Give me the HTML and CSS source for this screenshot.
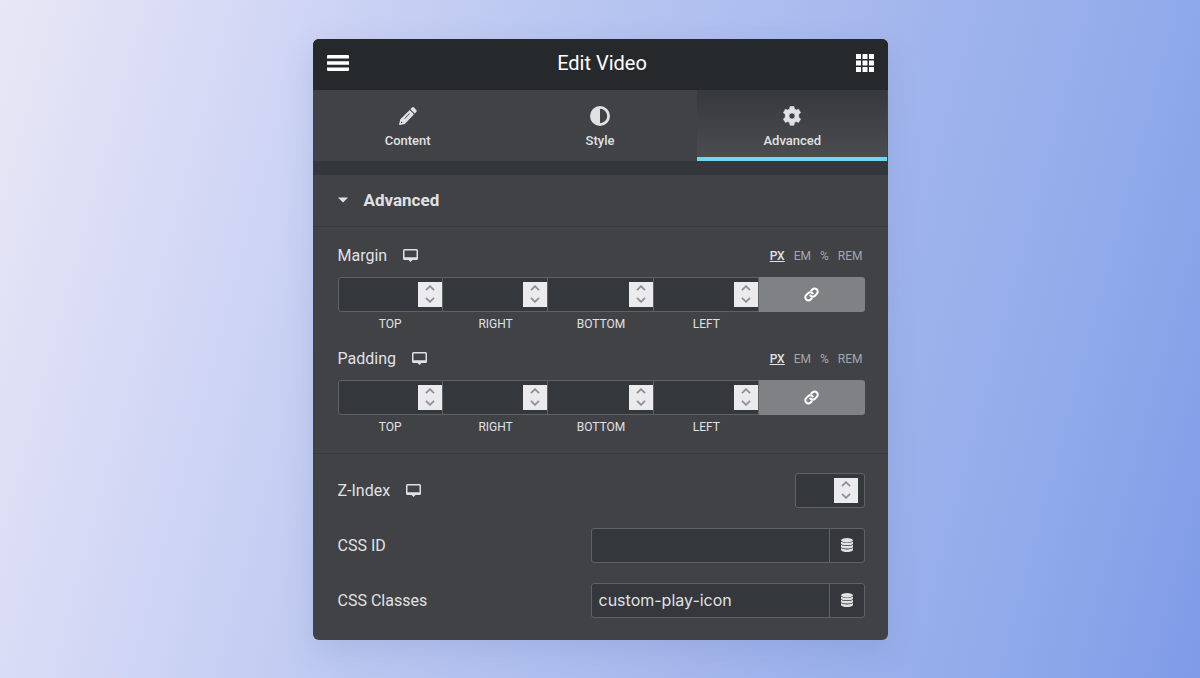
FILE: index.html
```html
<!DOCTYPE html>
<html lang="en">
<head>
  <meta charset="UTF-8">
  <meta name="viewport" content="width=device-width, initial-scale=1.0">
  <title>Edit Video</title>
  <link rel="stylesheet" href="styles.css">
</head>
<body>
  <!-- Shared icons -->
  <svg class="sprite" aria-hidden="true">
    <symbol id="icon-desktop" viewBox="0 0 15 13">
      <path fill="currentColor" fill-rule="evenodd" d="M1.500 0h12A1.500 1.500 0 0 1 15 1.500v8a1.500 1.500 0 0 1-1.500 1.500H9.500L7.500 13l-2-2h-4A1.500 1.500 0 0 1 0 9.500v-8A1.500 1.500 0 0 1 1.500 0zm0 1.400v6.800h12V1.400z"/>
    </symbol>
    <symbol id="icon-up" viewBox="0 0 10 6">
      <path fill="none" stroke="currentColor" stroke-width="1.800" d="M1 5.200l4-4 4 4"/>
    </symbol>
    <symbol id="icon-down" viewBox="0 0 10 6">
      <path fill="none" stroke="currentColor" stroke-width="1.800" d="M1 .8l4 4 4-4"/>
    </symbol>
    <symbol id="icon-link" viewBox="0 0 24 24">
      <g fill="none" stroke="currentColor" stroke-width="3.200" stroke-linecap="round">
        <path d="M10 13.500a5 5 0 0 0 7.500.5l3-3a5 5 0 0 0-7.100-7.100l-1.700 1.700"/>
        <path d="M14 10.500a5 5 0 0 0-7.500-.5l-3 3a5 5 0 0 0 7.100 7.100l1.700-1.700"/>
      </g>
    </symbol>
    <symbol id="icon-database" viewBox="0 0 12 14">
      <ellipse cx="6" cy="2.200" rx="6" ry="2.200" fill="currentColor"/>
      <path fill="currentColor" d="M0 3.500c1.500 1.700 10.500 1.700 12 0v2.200c-1 2-11 2-12 0zM0 6.800c1.500 1.700 10.500 1.700 12 0V9c-1 2-11 2-12 0zM0 10.100c1.500 1.700 10.500 1.700 12 0v1.800c-1 2.800-11 2.800-12 0z"/>
    </symbol>
  </svg>

  <main class="panel">
    <header class="panel-header">
      <button class="icon-button" type="button" aria-label="Menu">
        <svg width="22" height="16" viewBox="0 0 22 16"><path fill="currentColor" d="M1 0h20a1 1 0 0 1 1 1v2.500H0V1a1 1 0 0 1 1-1zM0 6.200h22v3.600H0zM0 12.500h22V15a1 1 0 0 1-1 1H1a1 1 0 0 1-1-1z"/></svg>
      </button>
      <h1>Edit Video</h1>
      <button class="icon-button" type="button" aria-label="Widgets">
        <svg width="18" height="18" viewBox="0 0 18 18"><path fill="currentColor" d="M0 0h5v5H0zM6.500 0h5v5h-5zM13 0h5v5h-5zM0 6.500h5v5H0zM6.500 6.500h5v5h-5zM13 6.500h5v5h-5zM0 13h5v5H0zM6.500 13h5v5h-5zM13 13h5v5h-5z"/></svg>
      </button>
    </header>

    <nav class="tabs">
      <button class="tab" type="button">
        <svg width="20" height="20" viewBox="0 0 20 20"><path fill="currentColor" fill-rule="evenodd" d="M14 1.600a1.400 1.400 0 0 1 2 0l2.300 2.300a1.400 1.400 0 0 1 0 2l-1.600 1.700-4.300-4.300zM11.700 4l4.300 4.300-9.200 9.600-4.900 1.100a.7.7 0 0 1-.8-.8L2.300 13.300zM3.300 15.400l-.5 1.900 1.900-.5zM11.300 7.300l-5 5.100.5.500 5-5.100z"/></svg>
        <span>Content</span>
      </button>
      <button class="tab" type="button">
        <svg width="20" height="20" viewBox="0 0 20 20"><path fill="currentColor" fill-rule="evenodd" d="M10 0a10 10 0 1 1 0 20 10 10 0 0 1 0-20zm0 2.800v14.400a7.200 7.200 0 0 0 0-14.400z"/></svg>
        <span>Style</span>
      </button>
      <button class="tab active" type="button">
        <svg width="20" height="20" viewBox="0 0 20 20"><path fill="currentColor" fill-rule="evenodd" d="M8 .6h4l.5 2.500 1.700 1 2.400-.8 2 3.400-1.900 1.700v2.900l1.900 1.700-2 3.400-2.400-.8-1.700 1-.5 2.600H8l-.5-2.600-1.700-1-2.400.8-2-3.400 1.900-1.700V8.400L1.400 6.700l2-3.400 2.400.8 1.700-1zM10 7a3 3 0 1 0 0 6 3 3 0 0 0 0-6z" stroke="currentColor" stroke-linejoin="round" stroke-width=".6"/></svg>
        <span>Advanced</span>
      </button>
    </nav>

    <section>
      <h2 class="section-heading">
        <button type="button" aria-expanded="true">
          <svg width="10" height="6" viewBox="0 0 10 6"><path fill="currentColor" d="M0 .5h10L5 5.500z"/></svg>
          Advanced
        </button>
      </h2>

      <div class="controls">
        <fieldset class="dimensions">
          <div class="control-title">
            <span class="control-label">Margin</span>
            <svg class="device" width="15" height="13"><use href="#icon-desktop"/></svg>
            <div class="units">
              <button class="selected" type="button">PX</button>
              <button type="button">EM</button>
              <button type="button">%</button>
              <button type="button">REM</button>
            </div>
          </div>
          <div class="sides">
            <div class="number">
              <input type="number" id="margin-top">
              <span class="stepper"><button type="button" aria-label="Increase"><svg width="10" height="6"><use href="#icon-up"/></svg></button><button type="button" aria-label="Decrease"><svg width="10" height="6"><use href="#icon-down"/></svg></button></span>
            </div>
            <div class="number">
              <input type="number" id="margin-right">
              <span class="stepper"><button type="button" aria-label="Increase"><svg width="10" height="6"><use href="#icon-up"/></svg></button><button type="button" aria-label="Decrease"><svg width="10" height="6"><use href="#icon-down"/></svg></button></span>
            </div>
            <div class="number">
              <input type="number" id="margin-bottom">
              <span class="stepper"><button type="button" aria-label="Increase"><svg width="10" height="6"><use href="#icon-up"/></svg></button><button type="button" aria-label="Decrease"><svg width="10" height="6"><use href="#icon-down"/></svg></button></span>
            </div>
            <div class="number">
              <input type="number" id="margin-left">
              <span class="stepper"><button type="button" aria-label="Increase"><svg width="10" height="6"><use href="#icon-up"/></svg></button><button type="button" aria-label="Decrease"><svg width="10" height="6"><use href="#icon-down"/></svg></button></span>
            </div>
            <button class="link-values" type="button" aria-label="Link values"><svg width="15" height="15"><use href="#icon-link"/></svg></button>
          </div>
          <div class="side-labels">
            <label for="margin-top">TOP</label>
            <label for="margin-right">RIGHT</label>
            <label for="margin-bottom">BOTTOM</label>
            <label for="margin-left">LEFT</label>
          </div>
        </fieldset>

        <fieldset class="dimensions">
          <div class="control-title">
            <span class="control-label">Padding</span>
            <svg class="device" width="15" height="13"><use href="#icon-desktop"/></svg>
            <div class="units">
              <button class="selected" type="button">PX</button>
              <button type="button">EM</button>
              <button type="button">%</button>
              <button type="button">REM</button>
            </div>
          </div>
          <div class="sides">
            <div class="number">
              <input type="number" id="padding-top">
              <span class="stepper"><button type="button" aria-label="Increase"><svg width="10" height="6"><use href="#icon-up"/></svg></button><button type="button" aria-label="Decrease"><svg width="10" height="6"><use href="#icon-down"/></svg></button></span>
            </div>
            <div class="number">
              <input type="number" id="padding-right">
              <span class="stepper"><button type="button" aria-label="Increase"><svg width="10" height="6"><use href="#icon-up"/></svg></button><button type="button" aria-label="Decrease"><svg width="10" height="6"><use href="#icon-down"/></svg></button></span>
            </div>
            <div class="number">
              <input type="number" id="padding-bottom">
              <span class="stepper"><button type="button" aria-label="Increase"><svg width="10" height="6"><use href="#icon-up"/></svg></button><button type="button" aria-label="Decrease"><svg width="10" height="6"><use href="#icon-down"/></svg></button></span>
            </div>
            <div class="number">
              <input type="number" id="padding-left">
              <span class="stepper"><button type="button" aria-label="Increase"><svg width="10" height="6"><use href="#icon-up"/></svg></button><button type="button" aria-label="Decrease"><svg width="10" height="6"><use href="#icon-down"/></svg></button></span>
            </div>
            <button class="link-values" type="button" aria-label="Link values"><svg width="15" height="15"><use href="#icon-link"/></svg></button>
          </div>
          <div class="side-labels">
            <label for="padding-top">TOP</label>
            <label for="padding-right">RIGHT</label>
            <label for="padding-bottom">BOTTOM</label>
            <label for="padding-left">LEFT</label>
          </div>
        </fieldset>
      </div>

      <div class="controls rows">
        <div class="row">
          <label class="control-label" for="z-index">Z-Index</label>
          <svg class="device" width="15" height="13"><use href="#icon-desktop"/></svg>
          <div class="number z-index">
            <input type="number" id="z-index">
            <span class="stepper"><button type="button" aria-label="Increase"><svg width="10" height="6"><use href="#icon-up"/></svg></button><button type="button" aria-label="Decrease"><svg width="10" height="6"><use href="#icon-down"/></svg></button></span>
          </div>
        </div>
        <div class="row">
          <label class="control-label" for="css-id">CSS ID</label>
          <div class="text-field">
            <input type="text" id="css-id">
            <button type="button" aria-label="Dynamic tags"><svg width="12" height="14"><use href="#icon-database"/></svg></button>
          </div>
        </div>
        <div class="row">
          <label class="control-label" for="css-classes">CSS Classes</label>
          <div class="text-field">
            <input type="text" id="css-classes" value="custom-play-icon">
            <button type="button" aria-label="Dynamic tags"><svg width="12" height="14"><use href="#icon-database"/></svg></button>
          </div>
        </div>
      </div>
    </section>
  </main>

  <script>
    // Stepper buttons change the number field they sit in
    document.querySelectorAll('.number').forEach(field => {
      const input = field.querySelector('input');
      const [up, down] = field.querySelectorAll('button');
      up.addEventListener('click', () => input.stepUp());
      down.addEventListener('click', () => input.stepDown());
    });
  </script>
</body>
</html>
```
FILE: styles.css
```css
* {
  margin: 0;
  padding: 0;
  box-sizing: border-box;
}

body {
  font-family: Roboto, Arial, sans-serif;
  font-size: 16px;
  color: #e0e1e3;
  background: linear-gradient(105deg, #e8e7f5 0%, #d5d9f5 17%, #bac7f1 40%, #a4b7ed 65%, #8ea9ea 87%, #7f9be7 100%);
  min-height: 100vh;
  display: flex;
  align-items: center;
  justify-content: center;
  padding: 20px;
}

button,
input {
  font: inherit;
  color: inherit;
  background: none;
  border: none;
}

button {
  cursor: pointer;
}

svg {
  display: block;
}

.sprite {
  position: absolute;
  width: 0;
  height: 0;
}

.panel {
  width: 100%;
  max-width: 575px;
  background: #404246;
  border-radius: 6px;
  overflow: hidden;
  box-shadow: 0 10px 30px rgba(70, 85, 150, 0.15);
}

/* Header */
.panel-header {
  display: flex;
  align-items: center;
  justify-content: space-between;
  height: 51px;
  padding: 0 14px 2px;
  background: #26292c;
  color: #fff;
}

.panel-header h1 {
  font-size: 20px;
  font-weight: 400;
}

/* Tabs */
.tabs {
  display: grid;
  grid-template-columns: repeat(3, 1fr);
  gap: 2px;
  border-bottom: 14px solid #34373b;
}

.tab {
  display: flex;
  flex-direction: column;
  align-items: center;
  gap: 6px;
  padding: 16px 0 8px;
  border-bottom: 4px solid transparent;
  font-size: 13px;
  font-weight: 500;
  line-height: 17px;
}

.tab.active {
  background: linear-gradient(#35383c, #4b4c50);
  border-bottom-color: #71d7f7;
}

/* Section */
.section-heading {
  font-size: 17px;
  font-weight: 700;
  border-bottom: 1px solid #35383c;
}

.section-heading button {
  display: flex;
  align-items: center;
  gap: 16px;
  width: 100%;
  height: 51px;
  padding: 0 25px;
}

.controls {
  padding: 18px 23px 17px 25px;
}

.rows {
  display: flex;
  flex-direction: column;
  gap: 20px;
  padding-top: 19px;
  padding-bottom: 22px;
  border-top: 1px solid #35383c;
}

.dimensions {
  min-width: 0;
  border: none;
  padding-bottom: 15px;
}

.dimensions:last-child {
  padding-bottom: 0;
}

.control-title,
.row {
  display: flex;
  align-items: center;
}

.control-title {
  height: 22px;
  margin-bottom: 10px;
}

.device {
  margin-left: 16px;
}

.units {
  display: flex;
  gap: 9px;
  margin-left: auto;
  padding-right: 2px;
  font-size: 12px;
  color: #a3a7ac;
}

.units .selected {
  color: #e0e1e3;
  font-weight: 500;
  text-decoration: underline;
}

.sides,
.side-labels {
  display: grid;
  grid-template-columns: repeat(5, minmax(0, 1fr));
}

.number {
  display: flex;
  align-items: center;
  height: 35px;
  background: #34373b;
  border: 1px solid #5e6165;
}

.sides .number {
  border-left-width: 0;
}

.sides .number:first-child {
  border-left-width: 1px;
  border-radius: 3px 0 0 3px;
}

.number input {
  flex: 1;
  min-width: 0;
  height: 100%;
  padding-left: 6px;
  appearance: textfield;
}

.stepper {
  display: flex;
  flex-direction: column;
  width: 24px;
  height: 25px;
  background: #ebebed;
  color: #8f8f93;
}

.stepper button {
  flex: 1;
  display: flex;
  align-items: center;
  justify-content: center;
}

.link-values {
  display: flex;
  align-items: center;
  justify-content: center;
  background: #808185;
  border-radius: 0 3px 3px 0;
  color: #fff;
}

.side-labels {
  padding-top: 4px;
  font-size: 12px;
  line-height: 17px;
  text-align: center;
}

.z-index {
  width: 70px;
  margin-left: auto;
  padding-right: 6px;
  border-radius: 3px;
}

.text-field {
  display: flex;
  width: 274px;
  height: 35px;
  margin-left: auto;
  background: #34373b;
  border: 1px solid #5e6165;
  border-radius: 3px;
}

.text-field input {
  flex: 1;
  min-width: 0;
  padding: 0 7px;
  font-family: Inter, sans-serif;
}

.text-field button {
  display: flex;
  align-items: center;
  justify-content: center;
  width: 35px;
  border-left: 1px solid #5e6165;
}
```
